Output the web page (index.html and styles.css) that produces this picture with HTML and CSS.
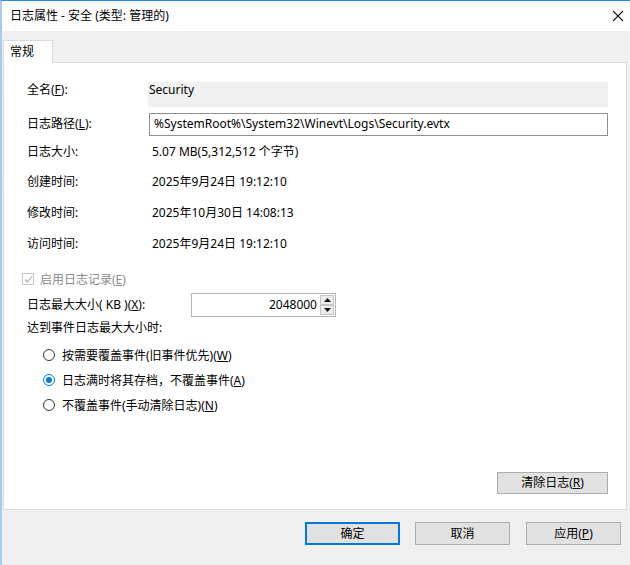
FILE: index.html
```html
<!DOCTYPE html>
<html lang="zh-CN">
<head>
<meta charset="utf-8">
<title>日志属性 - 安全 (类型: 管理的)</title>
<link rel="stylesheet" href="styles.css">
</head>
<body>
<div class="window">
  <div class="titlebar">
    <span class="title">日志属性 - 安全 (类型: 管理的)</span>
    <svg class="close" width="12" height="12" viewBox="0 0 12 12"><path d="M1 1 L11 11 M11 1 L1 11" stroke="#1a1a1a" stroke-width="1.1" fill="none"/></svg>
  </div>
  <div class="tabs">
    <div class="tab">常规</div>
  </div>
  <div class="panel">
    <div class="grid">
      <div class="lbl">全名(<u>F</u>):</div>
      <div class="cell"><div class="rofield">Security</div></div>
      <div class="lbl">日志路径(<u>L</u>):</div>
      <div class="cell"><div class="input">%SystemRoot%\System32\Winevt\Logs\Security.evtx</div></div>
      <div class="lbl mid">日志大小:</div>
      <div class="val">5.07 MB(5,312,512 个字节)</div>
      <div class="lbl mid">创建时间:</div>
      <div class="val">2025年9月24日 19:12:10</div>
      <div class="lbl mid">修改时间:</div>
      <div class="val">2025年10月30日 14:08:13</div>
      <div class="lbl mid">访问时间:</div>
      <div class="val">2025年9月24日 19:12:10</div>
    </div>
    <div class="checkrow">
      <span class="checkbox"><svg width="9" height="9" viewBox="0 0 9 9"><path d="M1 4.5 L3.5 7 L8 1.5" stroke="#a8a8a8" stroke-width="1.1" fill="none"/></svg></span>
      <span class="disabled">启用日志记录(<u>E</u>)</span>
    </div>
    <div class="spinrow">
      <span class="spinlbl">日志最大大小( KB )(<u>X</u>):</span>
      <div class="spin">
        <span class="spinval">2048000</span>
        <span class="spinbtns">
          <span class="sb"><svg width="7" height="4" viewBox="0 0 7 4"><path d="M0 4 L3.5 0 L7 4 Z" fill="#111"/></svg></span>
          <span class="sb"><svg width="7" height="4" viewBox="0 0 7 4"><path d="M0 0 L3.5 4 L7 0 Z" fill="#111"/></svg></span>
        </span>
      </div>
    </div>
    <div class="textrow">达到事件日志最大大小时:</div>
    <div class="radios">
      <div class="radiorow"><span class="radio"></span><span>按需要覆盖事件(旧事件优先)(<u>W</u>)</span></div>
      <div class="radiorow"><span class="radio on"></span><span>日志满时将其存档，不覆盖事件(<u>A</u>)</span></div>
      <div class="radiorow"><span class="radio"></span><span>不覆盖事件(手动清除日志)(<u>N</u>)</span></div>
    </div>
    <div class="clearrow">
      <button class="btn clear">清除日志(<u>R</u>)</button>
    </div>
  </div>
  <div class="footer">
    <button class="btn default">确定</button>
    <button class="btn">取消</button>
    <button class="btn">应用(<u>P</u>)</button>
  </div>
</div>
</body>
</html>
```

FILE: styles.css
```css
* { box-sizing: border-box; }
html, body { margin: 0; padding: 0; }
body {
  width: 630px;
  height: 565px;
  overflow: hidden;
  font-family: "Noto Sans", "Noto Sans CJK SC", sans-serif;
  font-size: 12px;
  color: #000;
}
.window {
  width: 630px;
  height: 565px;
  background: #f0f0f0;
  border-top: 1px solid #2b8ad9;
  border-left: 2px solid #a6cbee;
  display: flex;
  flex-direction: column;
}
.titlebar {
  height: 30px;
  background: #fff;
  display: flex;
  align-items: center;
  justify-content: space-between;
  padding: 0 6px 0 8px;
}
.title { font-size: 12px; line-height: 16px; }
.close { display: block; }
.tabs {
  margin-top: 9px;
  margin-left: 1px;
  display: flex;
  position: relative;
  z-index: 1;
}
.tab {
  width: 50px;
  height: 23px;
  background: #fff;
  border: 1px solid #d9d9d9;
  border-bottom: none;
  padding-left: 6px;
  line-height: 21px;
  margin-bottom: -1px;
}
.panel {
  margin-left: 1px;
  width: 624px;
  height: 448px;
  background: #fff;
  border: 1px solid #d9d9d9;
  padding: 19px 18px 15px 17px;
  display: flex;
  flex-direction: column;
}
.grid {
  display: grid;
  grid-template-columns: 121px 1fr;
  grid-template-rows: 31px 24px 30px 30px 31px 31px;
  margin-left: 6px;
}
.lbl { line-height: 16px; }
.lbl.mid, .val { align-self: center; }
.lbl:nth-child(3) { padding-top: 3px; }
.val { padding-left: 4px; line-height: 16px; }
.rofield {
  height: 25px;
  background: #f0f0f0;
  padding-left: 1px;
  line-height: 16px;
}
.input {
  height: 23px;
  border: 1px solid #8e8e8e;
  padding-left: 4px;
  line-height: 20px;
  margin-left: 1px;
}
.checkrow {
  margin-top: 10px;
  height: 20px;
  display: flex;
  align-items: center;
  margin-left: 1px;
}
.checkbox {
  width: 12px;
  height: 12px;
  border: 1px solid #c6c6c6;
  display: flex;
  align-items: center;
  justify-content: center;
  margin-right: 6px;
}
.checkbox svg { display: block; }
.disabled { color: #8a8a8a; }
.spinrow {
  margin-top: 4px;
  height: 24px;
  display: flex;
  align-items: center;
  margin-left: 6px;
}
.spinlbl { width: 164px; margin-top: -3px; }
.spin {
  width: 145px;
  height: 24px;
  border: 1px solid #b4b4b4;
  display: flex;
  align-items: center;
  justify-content: flex-end;
  padding-right: 1px;
}
.spinval { margin-right: 3px; line-height: 16px; }
.spinbtns {
  width: 14px;
  height: 20px;
  display: flex;
  flex-direction: column;
}
.sb {
  flex: 1;
  border: 1px solid #c4c4c4;
  background: #ececec;
  display: flex;
  align-items: center;
  justify-content: center;
}
.sb svg { display: block; }
.textrow {
  margin-top: 1px;
  height: 20px;
  line-height: 20px;
  margin-left: 6px;
}
.radios { margin-top: 4px; margin-left: 22px; }
.radiorow {
  height: 25px;
  display: flex;
  align-items: center;
}
.radio {
  width: 12px;
  height: 12px;
  border: 1px solid #333;
  border-radius: 50%;
  margin-right: 7px;
  position: relative;
  flex: none;
}
.radio.on { border-color: #0078d7; }
.radio.on::after {
  content: "";
  position: absolute;
  left: 2px;
  top: 2px;
  width: 6px;
  height: 6px;
  border-radius: 50%;
  background: #0078d7;
}
.clearrow {
  margin-top: auto;
  display: flex;
  justify-content: flex-end;
}
.btn {
  font-family: "Noto Sans", "Noto Sans CJK SC", sans-serif;
  font-size: 12px;
  color: #000;
  background: #e1e1e1;
  border: 1px solid #adadad;
  height: 23px;
  width: 95px;
  padding: 0;
  line-height: 20px;
}
.btn.clear { width: 111px; height: 22px; }
.btn.default {
  border-color: #0078d7;
  box-shadow: inset 0 0 0 1px #0078d7;
}
.footer {
  margin-top: 12px;
  display: flex;
  justify-content: flex-end;
  gap: 15px;
  padding-right: 9px;
}
.footer .btn:last-child { margin-left: 1px; }
```
